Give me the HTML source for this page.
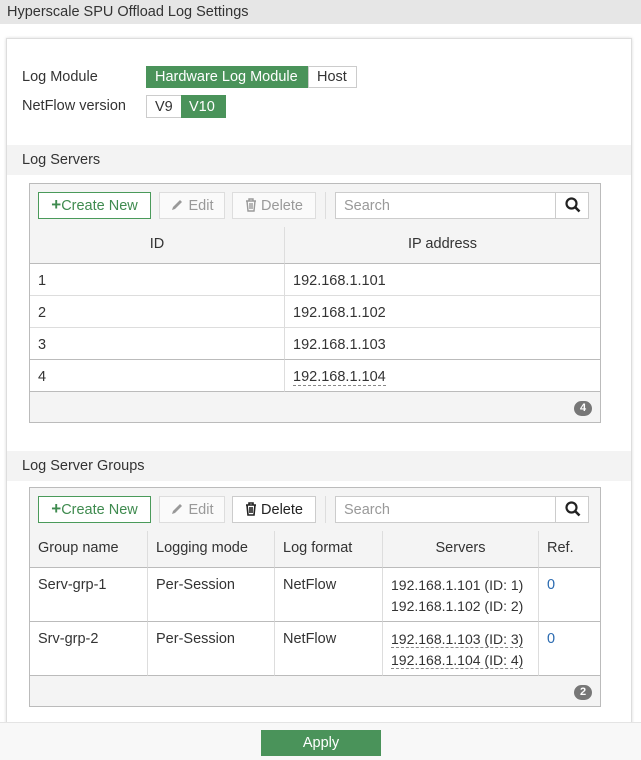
<!DOCTYPE html>
<html><head><meta charset="utf-8"><style>
*{box-sizing:border-box;margin:0;padding:0}
body{width:641px;height:760px;background:#fff;font-family:"Liberation Sans",sans-serif;font-size:14.5px;color:#333;position:relative;overflow:hidden}
.a{position:absolute}
.hdr{left:0;top:0;width:641px;height:24px;background:#e6e6e6;font-size:14.5px;padding:4px 0 0 7px}
.card{left:6px;top:38px;width:626px;height:700px;border:1px solid #ddd;box-shadow:0 0 3px rgba(0,0,0,.15);background:#fff}
.band{left:7px;width:624px;height:30px;background:#f3f3f3;padding:7px 0 0 15px}
.box{left:29px;width:572px;border:1px solid #bbb;background:#f4f4f4}
.btn{position:absolute;height:27px;border:1px solid #ddd;background:#fafafa;color:#999;padding:5px 0 0 0;text-align:center;font-size:14.5px}
.grn{border-color:#4a9a5a;color:#3f8b4f;background:#fff}
.srch{position:absolute;height:27px;border:1px solid #ccc;background:#fff;color:#999;padding:5px 0 0 8px}
.cell{position:absolute;background:#fff;border-right:1px solid #ddd;border-bottom:1px solid #ddd;padding:9px 0 0 8px}
.th{background:#f4f4f4;border-bottom:1px solid #bbb}
.dot{border-bottom:1px dashed #888}
.badge{position:absolute;width:18px;height:15px;border-radius:8px;background:#777;color:#fff;font-size:11px;text-align:center;line-height:15px;font-weight:bold}
svg{vertical-align:-2px}
</style></head><body>
<div class="a hdr">Hyperscale SPU Offload Log Settings</div>
<div class="a card"></div>
<div class="a" style="left:22px;top:69px">Log Module</div>
<div class="a" style="left:146px;top:66px;width:162px;height:22px;background:#4a935a;color:#fff;padding:3px 0 0 9px">Hardware Log Module</div>
<div class="a" style="left:308px;top:66px;width:49px;height:22px;border:1px solid #ccc;padding:2px 0 0 8px">Host</div>
<div class="a" style="left:22px;top:98px">NetFlow version</div>
<div class="a" style="left:146px;top:95px;width:36px;height:23px;border:1px solid #ccc;padding:3px 0 0 8px">V9</div>
<div class="a" style="left:181px;top:95px;width:45px;height:23px;background:#4a935a;color:#fff;padding:4px 0 0 8px">V10</div>

<div class="a band" style="top:145px">Log Servers</div>
<div class="a box" style="top:183px;height:240px">
 <div class="btn grn" style="left:8px;top:8px;width:113px"><b style="font-size:17px;line-height:12px">+</b>Create New</div>
 <div class="btn" style="left:129px;top:8px;width:66px"><svg width="14" height="14" viewBox="0 0 14 14"><path d="M2 12l1-3 7-7 2 2-7 7z" fill="#999"/></svg> Edit</div>
 <div class="btn" style="left:202px;top:8px;width:84px"><svg width="12" height="14" viewBox="0 0 12 14"><path d="M1 3h10M4 3V1h4v2M2 3l1 10h6l1-10M5 5v6M7 5v6" fill="none" stroke="#999" stroke-width="1.4"/></svg> Delete</div>
 <div class="a" style="left:295px;top:8px;width:1px;height:27px;background:#ddd"></div>
 <div class="srch" style="left:305px;top:8px;width:221px">Search</div>
 <div class="srch" style="left:525px;top:8px;width:34px;color:#222;padding:3px 0 0 8px"><svg width="18" height="18" viewBox="0 0 18 18"><circle cx="7.5" cy="7.5" r="5" fill="none" stroke="#222" stroke-width="2.2"/><path d="M11 11l4.5 4.5" stroke="#222" stroke-width="2.6"/></svg></div>
 <div class="cell th" style="left:0;top:43px;width:255px;height:37px;text-align:center;padding:9px 0 0 0">ID</div>
 <div class="cell th" style="left:255px;top:43px;width:315px;height:37px;text-align:center;padding:9px 0 0 0;border-right:0">IP address</div>
 <div class="cell" style="left:0;top:80px;width:255px;height:32px">1</div><div class="cell" style="left:255px;top:80px;width:315px;height:32px;border-right:0">192.168.1.101</div>
 <div class="cell" style="left:0;top:112px;width:255px;height:32px">2</div><div class="cell" style="left:255px;top:112px;width:315px;height:32px;border-right:0">192.168.1.102</div>
 <div class="cell" style="left:0;top:144px;width:255px;height:32px;border-bottom-color:#bbb">3</div><div class="cell" style="left:255px;top:144px;width:315px;height:32px;border-bottom-color:#bbb;border-right:0">192.168.1.103</div>
 <div class="cell" style="left:0;top:176px;width:255px;height:32px;border-bottom-color:#bbb">4</div><div class="cell" style="left:255px;top:176px;width:315px;height:32px;border-bottom-color:#bbb;border-right:0"><span class="dot">192.168.1.104</span></div>
 <div class="badge" style="left:544px;top:217px">4</div>
</div>

<div class="a band" style="top:451px">Log Server Groups</div>
<div class="a box" style="top:487px;height:220px">
 <div class="btn grn" style="left:8px;top:8px;width:113px"><b style="font-size:17px;line-height:12px">+</b>Create New</div>
 <div class="btn" style="left:129px;top:8px;width:66px"><svg width="14" height="14" viewBox="0 0 14 14"><path d="M2 12l1-3 7-7 2 2-7 7z" fill="#999"/></svg> Edit</div>
 <div class="btn" style="left:202px;top:8px;width:84px;color:#222;border-color:#ccc;background:#fff"><svg width="12" height="14" viewBox="0 0 12 14"><path d="M1 3h10M4 3V1h4v2M2 3l1 10h6l1-10M5 5v6M7 5v6" fill="none" stroke="#222" stroke-width="1.6"/></svg> Delete</div>
 <div class="a" style="left:295px;top:8px;width:1px;height:27px;background:#ddd"></div>
 <div class="srch" style="left:305px;top:8px;width:221px">Search</div>
 <div class="srch" style="left:525px;top:8px;width:34px;color:#222;padding:3px 0 0 8px"><svg width="18" height="18" viewBox="0 0 18 18"><circle cx="7.5" cy="7.5" r="5" fill="none" stroke="#222" stroke-width="2.2"/><path d="M11 11l4.5 4.5" stroke="#222" stroke-width="2.6"/></svg></div>
 <div class="cell th" style="left:0;top:43px;width:118px;height:37px">Group name</div>
 <div class="cell th" style="left:118px;top:43px;width:127px;height:37px">Logging mode</div>
 <div class="cell th" style="left:245px;top:43px;width:108px;height:37px">Log format</div>
 <div class="cell th" style="left:353px;top:43px;width:156px;height:37px;text-align:center;padding-left:0">Servers</div>
 <div class="cell th" style="left:509px;top:43px;width:61px;height:37px;border-right:0">Ref.</div>
 <div class="cell" style="left:0;top:80px;width:118px;height:54px;border-bottom-color:#bbb">Serv-grp-1</div>
 <div class="cell" style="left:118px;top:80px;width:127px;height:54px;border-bottom-color:#bbb">Per-Session</div>
 <div class="cell" style="left:245px;top:80px;width:108px;height:54px;border-bottom-color:#bbb">NetFlow</div>
 <div class="cell" style="left:353px;top:80px;width:156px;height:54px;border-bottom-color:#bbb;line-height:21px;padding-top:7px;font-size:14px">192.168.1.101 (ID: 1)<br>192.168.1.102 (ID: 2)</div>
 <div class="cell" style="left:509px;top:80px;width:61px;height:54px;border-bottom-color:#bbb;color:#2a6ab0;border-right:0">0</div>
 <div class="cell" style="left:0;top:134px;width:118px;height:54px;border-bottom-color:#bbb">Srv-grp-2</div>
 <div class="cell" style="left:118px;top:134px;width:127px;height:54px;border-bottom-color:#bbb">Per-Session</div>
 <div class="cell" style="left:245px;top:134px;width:108px;height:54px;border-bottom-color:#bbb">NetFlow</div>
 <div class="cell" style="left:353px;top:134px;width:156px;height:54px;border-bottom-color:#bbb;line-height:21px;padding-top:7px;font-size:14px"><span class="dot">192.168.1.103 (ID: 3)</span><br><span class="dot">192.168.1.104 (ID: 4)</span></div>
 <div class="cell" style="left:509px;top:134px;width:61px;height:54px;border-bottom-color:#bbb;color:#2a6ab0;border-right:0">0</div>
 <div class="badge" style="left:544px;top:197px">2</div>
</div>

<div class="a" style="left:0;top:722px;width:641px;height:38px;background:#f8f8f8;border-top:1px solid #e4e4e4"></div>
<div class="a" style="left:261px;top:730px;width:120px;height:26px;background:#4a935a;color:#fff;text-align:center;padding-top:5px">Apply</div>
</body></html>
